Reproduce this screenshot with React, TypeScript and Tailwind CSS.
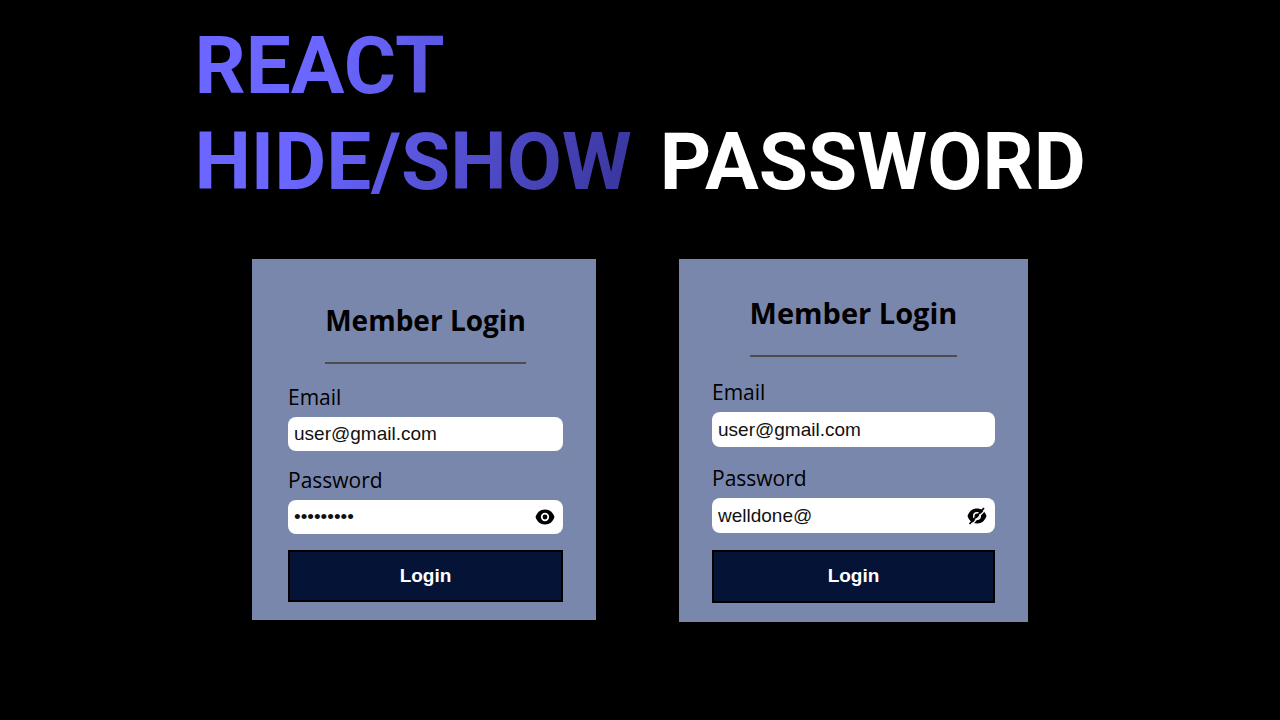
import { useState } from "react";
import clsx from "clsx";

function EyeIcon() {
  return (
    <svg viewBox="0 0 40 32" className="h-4 w-5" aria-hidden="true">
      <path
        d="M 20,1 C 10,1 4,7 1,16 C 4,25 10,31 20,31 C 30,31 36,25 39,16 C 36,7 30,1 20,1 Z"
        fill="#000"
      />
      <circle cx="20" cy="16" r="6.5" fill="#000" stroke="#fff" strokeWidth="3.5" />
    </svg>
  );
}

function EyeOffIcon() {
  return (
    <svg viewBox="0 0 40 36" className="h-[18px] w-5" aria-hidden="true">
      <path
        d="M 20,3 C 10,3 4,9 1,18 C 4,27 10,33 20,33 C 30,33 36,27 39,18 C 36,9 30,3 20,3 Z"
        fill="#000"
      />
      <circle cx="20" cy="18" r="6.5" fill="#000" stroke="#fff" strokeWidth="3" />
      {/* Slash with a white gap on its lower side */}
      <path d="M 9,36 L 38,4" stroke="#fff" strokeWidth="2.5" />
      <path d="M 5,34 L 34,2" stroke="#000" strokeWidth="3.5" />
    </svg>
  );
}

const inputClass =
  "block w-full rounded-lg bg-white px-1.5 font-['Liberation_Sans',Arial,sans-serif] text-[19px] text-[#111] outline-none";

const labelClass = "mb-[7px] text-[21px] leading-[26px]";

type LoginCardProps = {
  id: string;
  defaultVisible?: boolean;
  large?: boolean;
};

function LoginCard({ id, defaultVisible = false, large = false }: LoginCardProps) {
  const [visible, setVisible] = useState(defaultVisible);

  return (
    <form
      onSubmit={(e) => e.preventDefault()}
      className={clsx(
        "flex flex-col bg-[#7a87ad] pr-[33px] font-['Trebuchet_MS','Open_Sans',sans-serif] text-black",
        large ? "w-[349px] pt-[37px] pb-[19px] pl-[33px]" : "w-[344px] pt-11 pb-[18px] pl-9"
      )}
    >
      <h2
        className={clsx(
          "self-center border-b-2 border-[#4d4d4d] pb-[25px] leading-[34px] font-bold whitespace-nowrap",
          large ? "mb-[22px] text-[29px]" : "mb-5 text-[28px]"
        )}
      >
        Member Login
      </h2>

      <label htmlFor={`${id}-email`} className={labelClass}>
        Email
      </label>
      <input
        id={`${id}-email`}
        type="email"
        defaultValue="user@gmail.com"
        className={clsx(inputClass, large ? "mb-[18px] h-[35px]" : "mb-4 h-[34px]")}
      />

      <label htmlFor={`${id}-password`} className={labelClass}>
        Password
      </label>
      <div className={clsx("relative", large ? "mb-[17px]" : "mb-4")}>
        <input
          id={`${id}-password`}
          type={visible ? "text" : "password"}
          defaultValue="welldone@"
          className={clsx(inputClass, large ? "h-[35px]" : "h-[34px]")}
        />
        <button
          type="button"
          aria-label={visible ? "Hide password" : "Show password"}
          onClick={() => setVisible(!visible)}
          className="absolute inset-y-0 right-2 flex cursor-pointer items-center"
        >
          {visible ? <EyeOffIcon /> : <EyeIcon />}
        </button>
      </div>

      <button
        type="submit"
        className={clsx(
          "cursor-pointer border-2 border-black bg-[#051337] font-['Liberation_Sans',Arial,sans-serif] text-[19px] font-bold text-white",
          large ? "h-[53px]" : "h-[52px]"
        )}
      >
        Login
      </button>
    </form>
  );
}

export default function App() {
  return (
    <main className="flex min-h-screen flex-col items-center bg-black pt-[18px]">
      <h1 className="flex items-end gap-7 font-[Roboto,sans-serif] text-[80px] leading-24 font-bold whitespace-nowrap text-white">
        <span className="bg-linear-[110deg] from-[#6a66ff] from-30% to-[#38349a] bg-clip-text text-transparent">
          REACT
          <br />
          HIDE/SHOW
        </span>
        <span>PASSWORD</span>
      </h1>

      <div className="mt-[49px] flex items-start gap-[83px]">
        <LoginCard id="hidden" />
        <LoginCard id="shown" defaultVisible large />
      </div>
    </main>
  );
}
